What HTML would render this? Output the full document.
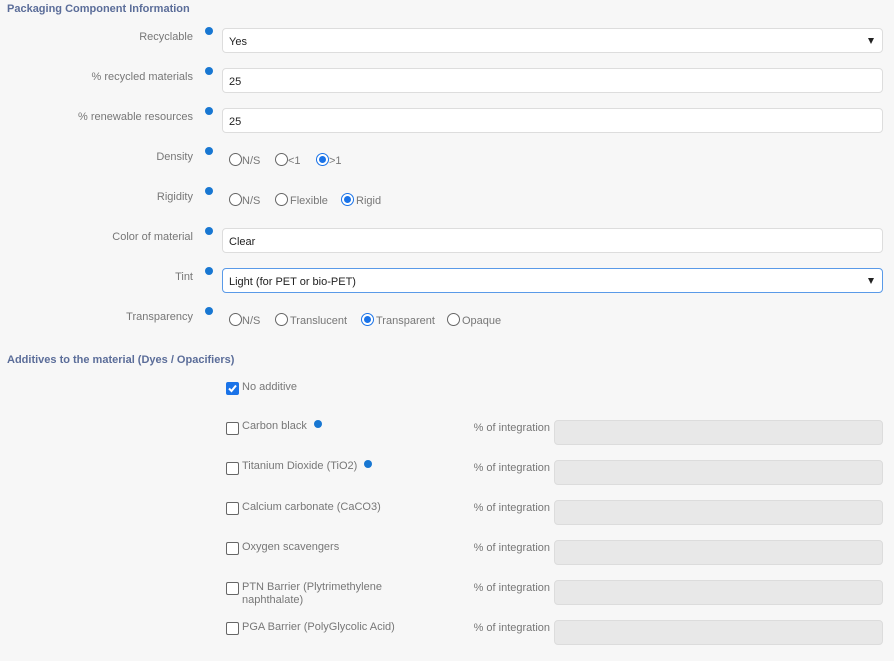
<!DOCTYPE html>
<html><head><meta charset="utf-8"><style>
*{box-sizing:border-box;margin:0;padding:0}
body{width:894px;height:661px;background:#f7f7f7;font-family:"Liberation Sans",Arial,sans-serif;font-size:11px;color:#777;position:relative;overflow:hidden}
.a{position:absolute;white-space:nowrap;margin-top:1px}
h{position:absolute;left:7px;font-weight:bold;color:#5b6d99;font-size:11px;margin-top:1px}
.lbl{position:absolute;right:701px;text-align:right;margin-top:1px}
.dot{position:absolute;left:205px;width:8px;height:8px;border-radius:50%;background:#1877d2}
.in{position:absolute;left:222px;width:661px;height:25px;background:#fff;border:1px solid #ddd;border-radius:4px;color:#222;padding:7px 0 0 6px}
.in.f{border-color:#5a9ae8}
.arr{position:absolute;right:8px;top:9px;width:0;height:0;border-left:3.5px solid transparent;border-right:3.5px solid transparent;border-top:6px solid #222}
.r{position:absolute;width:13px;height:13px;border:1px solid #666;border-radius:50%;background:#fff}
.r.on{border-color:#1a73e8;border-width:1.5px}
.r.on::after{content:"";position:absolute;left:2px;top:2px;width:7px;height:7px;border-radius:50%;background:#1a73e8}
.rt{position:absolute;color:#777}
.cb{position:absolute;left:226px;width:13px;height:13px;border:1px solid #666;border-radius:2px;background:#fff}
.cb.on{background:#1a73e8;border-color:#1a73e8}
.g{position:absolute;left:554px;width:329px;height:25px;background:#e8e8e8;border:1px solid #dcdcdc;border-radius:4px}
.pi{position:absolute;right:344px}
</style></head><body>
<h style="top:2px">Packaging Component Information</h>

<div class="lbl" style="top:30px">Recyclable</div><div class="dot" style="top:27px"></div>
<div class="in" style="top:28px">Yes<div class="arr"></div></div>

<div class="lbl" style="top:70px">% recycled materials</div><div class="dot" style="top:67px"></div>
<div class="in" style="top:68px">25</div>

<div class="lbl" style="top:110px">% renewable resources</div><div class="dot" style="top:107px"></div>
<div class="in" style="top:108px">25</div>

<div class="lbl" style="top:150px">Density</div><div class="dot" style="top:147px"></div>
<div class="r" style="left:229px;top:153px"></div><div class="rt a" style="left:242px;top:154px">N/S</div>
<div class="r" style="left:275px;top:153px"></div><div class="rt a" style="left:288px;top:154px">&lt;1</div>
<div class="r on" style="left:316px;top:153px"></div><div class="rt a" style="left:329px;top:154px">&gt;1</div>

<div class="lbl" style="top:190px">Rigidity</div><div class="dot" style="top:187px"></div>
<div class="r" style="left:229px;top:193px"></div><div class="rt a" style="left:242px;top:194px">N/S</div>
<div class="r" style="left:275px;top:193px"></div><div class="rt a" style="left:290px;top:194px">Flexible</div>
<div class="r on" style="left:341px;top:193px"></div><div class="rt a" style="left:356px;top:194px">Rigid</div>

<div class="lbl" style="top:230px">Color of material</div><div class="dot" style="top:227px"></div>
<div class="in" style="top:228px">Clear</div>

<div class="lbl" style="top:270px">Tint</div><div class="dot" style="top:267px"></div>
<div class="in f" style="top:268px">Light (for PET or bio-PET)<div class="arr"></div></div>

<div class="lbl" style="top:310px">Transparency</div><div class="dot" style="top:307px"></div>
<div class="r" style="left:229px;top:313px"></div><div class="rt a" style="left:242px;top:314px">N/S</div>
<div class="r" style="left:275px;top:313px"></div><div class="rt a" style="left:290px;top:314px">Translucent</div>
<div class="r on" style="left:361px;top:313px"></div><div class="rt a" style="left:376px;top:314px">Transparent</div>
<div class="r" style="left:447px;top:313px"></div><div class="rt a" style="left:462px;top:314px">Opaque</div>

<h style="top:353px">Additives to the material (Dyes / Opacifiers)</h>

<div class="cb on" style="top:382px"><svg width="11" height="11" viewBox="0 0 11 11" style="position:absolute;left:0;top:0"><path d="M2 5.5 L4.5 8 L9 2.5" stroke="#fff" stroke-width="2" fill="none"/></svg></div>
<div class="a" style="left:242px;top:380px">No additive</div>

<div class="cb" style="top:422px"></div><div class="a" style="left:242px;top:419px">Carbon black</div><div class="dot" style="left:314px;top:420px"></div>
<div class="pi a" style="top:421px">% of integration</div><div class="g" style="top:420px"></div>

<div class="cb" style="top:462px"></div><div class="a" style="left:242px;top:459px">Titanium Dioxide (TiO2)</div><div class="dot" style="left:364px;top:460px"></div>
<div class="pi a" style="top:461px">% of integration</div><div class="g" style="top:460px"></div>

<div class="cb" style="top:502px"></div><div class="a" style="left:242px;top:500px">Calcium carbonate (CaCO3)</div>
<div class="pi a" style="top:501px">% of integration</div><div class="g" style="top:500px"></div>

<div class="cb" style="top:542px"></div><div class="a" style="left:242px;top:540px">Oxygen scavengers</div>
<div class="pi a" style="top:541px">% of integration</div><div class="g" style="top:540px"></div>

<div class="cb" style="top:582px"></div><div class="a" style="left:242px;top:580px;line-height:13px">PTN Barrier (Plytrimethylene<br>naphthalate)</div>
<div class="pi a" style="top:581px">% of integration</div><div class="g" style="top:580px"></div>

<div class="cb" style="top:622px"></div><div class="a" style="left:242px;top:620px">PGA Barrier (PolyGlycolic Acid)</div>
<div class="pi a" style="top:621px">% of integration</div><div class="g" style="top:620px"></div>
</body></html>
